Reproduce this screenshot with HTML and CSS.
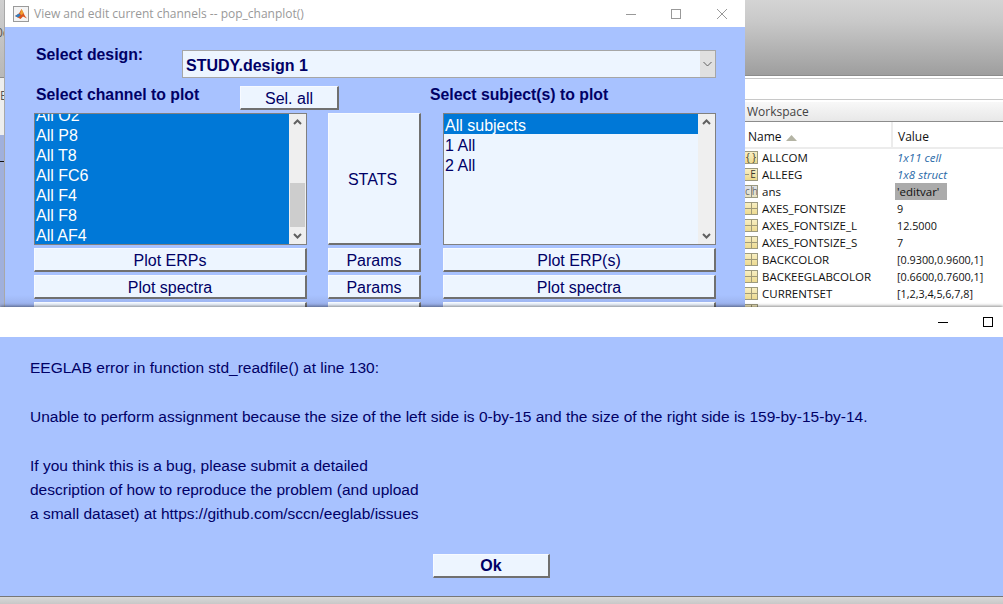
FILE: index.html
```html
<!DOCTYPE html>
<html lang="en">
<head>
<meta charset="utf-8">
<title>pop_chanplot</title>
<link rel="stylesheet" href="styles.css">
</head>
<body>
<svg class="defs" width="0" height="0">
  <defs>
    <linearGradient id="gold" x1="0" y1="0" x2="0" y2="1">
      <stop offset="0" stop-color="#f8efc4"/>
      <stop offset="1" stop-color="#ecd98e"/>
    </linearGradient>
  </defs>
  <symbol id="grid" viewBox="0 0 13 13">
    <rect x="-1" y="0.5" width="13.5" height="12" fill="url(#gold)" stroke="#9c9a80"/>
    <path d="M0 6.5H13M6.5 0V13" stroke="#a09a78" fill="none"/>
  </symbol>
  <symbol id="up" viewBox="0 0 9 6"><path d="M1 5L4.5 1.5L8 5" fill="none" stroke="#606060" stroke-width="2"/></symbol>
  <symbol id="down" viewBox="0 0 9 6"><path d="M1 1L4.5 4.5L8 1" fill="none" stroke="#606060" stroke-width="2"/></symbol>
</svg>

<div class="desktop">
  <div class="edge">
    <span class="edge-a">0c</span>
    <span class="edge-b">E</span>
    <div class="edge-line"></div>
  </div>

  <section class="matlab">
    <div class="matlab-top"></div>
    <div class="toolstrip"></div>
    <div class="ws-title">Workspace</div>
    <div class="ws-head">
      <div class="ws-name">Name <svg class="sort" width="11" height="6" viewBox="0 0 11 6"><path d="M0 6L5.5 0L11 6Z" fill="#b4b4a4"/></svg></div>
      <div class="ws-value">Value</div>
    </div>
    <div class="ws-row"><span class="ico">{ }</span><span class="ws-n">ALLCOM</span><span class="ws-v obj">1x11 cell</span></div>
    <div class="ws-row"><span class="ico ico-e">E</span><span class="ws-n">ALLEEG</span><span class="ws-v obj">1x8 struct</span></div>
    <div class="ws-row"><span class="ico ico-c">ch</span><span class="ws-n">ans</span><span class="ws-v"><span class="sel">'editvar'</span></span></div>
    <div class="ws-row"><svg class="ico-g"><use href="#grid"/></svg><span class="ws-n">AXES_FONTSIZE</span><span class="ws-v">9</span></div>
    <div class="ws-row"><svg class="ico-g"><use href="#grid"/></svg><span class="ws-n">AXES_FONTSIZE_L</span><span class="ws-v">12.5000</span></div>
    <div class="ws-row"><svg class="ico-g"><use href="#grid"/></svg><span class="ws-n">AXES_FONTSIZE_S</span><span class="ws-v">7</span></div>
    <div class="ws-row"><svg class="ico-g"><use href="#grid"/></svg><span class="ws-n">BACKCOLOR</span><span class="ws-v">[0.9300,0.9600,1]</span></div>
    <div class="ws-row"><svg class="ico-g"><use href="#grid"/></svg><span class="ws-n">BACKEEGLABCOLOR</span><span class="ws-v">[0.6600,0.7600,1]</span></div>
    <div class="ws-row"><svg class="ico-g"><use href="#grid"/></svg><span class="ws-n">CURRENTSET</span><span class="ws-v">[1,2,3,4,5,6,7,8]</span></div>
    <div class="ws-row"><svg class="ico-g"><use href="#grid"/></svg><span class="ws-n">CURRENTSTUDY</span><span class="ws-v">1</span></div>
  </section>

  <section class="win win-chan">
    <header class="titlebar">
      <svg class="logo" width="16" height="16" viewBox="0 0 16 16">
        <rect x="0.5" y="0.5" width="15" height="15" fill="#f4f4f4" stroke="#9a9a9a"/>
        <path d="M2 10L6 7.5L8.5 3L12 10L14 12.5L10 10.5L7.5 13Z" fill="#d9541e"/>
        <path d="M2 10L6 7.5L7.5 9.5L5 11.5Z" fill="#2f7fc4"/>
        <path d="M8.5 3L10.5 6.5L9 9L7 8Z" fill="#f0a030"/>
      </svg>
      <span class="title-text">View and edit current channels -- pop_chanplot()</span>
      <div class="win-controls">
        <svg width="10" height="10" viewBox="0 0 10 10"><path d="M0 5.5H10" stroke="#999"/></svg>
        <svg width="10" height="10" viewBox="0 0 10 10"><rect x="0.5" y="0.5" width="9" height="9" fill="none" stroke="#999"/></svg>
        <svg class="close" width="10" height="10" viewBox="0 0 10 10"><path d="M0 0L10 10M10 0L0 10" stroke="#999"/></svg>
      </div>
    </header>
    <div class="chan-body">
      <div class="design-row">
        <label class="lbl lbl-design">Select design:</label>
        <div class="popup">
          <span class="popup-text">STUDY.design 1</span>
          <span class="popup-arrow"><svg width="9" height="6" viewBox="0 0 9 6"><path d="M0.5 1L4.5 5L8.5 1" fill="none" stroke="#606060"/></svg></span>
        </div>
      </div>
      <div class="label-row">
        <label class="lbl lbl-chan">Select channel to plot</label>
        <button class="btn btn-selall">Sel. all</button>
        <label class="lbl lbl-subj">Select subject(s) to plot</label>
      </div>
      <div class="panel-grid">
        <div class="list">
          <div class="list-rows list-scrolled">
            <div class="item on">All O2</div>
            <div class="item on">All P8</div>
            <div class="item on">All T8</div>
            <div class="item on">All FC6</div>
            <div class="item on">All F4</div>
            <div class="item on">All F8</div>
            <div class="item on">All AF4</div>
          </div>
          <div class="scroll">
            <svg class="chev" width="9" height="6"><use href="#up"/></svg>
            <div class="track"><div class="thumb"></div></div>
            <svg class="chev" width="9" height="6"><use href="#down"/></svg>
          </div>
        </div>
        <button class="btn btn-stats">STATS</button>
        <div class="list col3">
          <div class="list-rows list-plain">
            <div class="item on">All subjects</div>
            <div class="item">1 All</div>
            <div class="item">2 All</div>
          </div>
          <div class="scroll">
            <svg class="chev" width="9" height="6"><use href="#up"/></svg>
            <div class="track"></div>
            <svg class="chev" width="9" height="6"><use href="#down"/></svg>
          </div>
        </div>
        <button class="btn">Plot ERPs</button>
        <button class="btn">Params</button>
        <button class="btn col3">Plot ERP(s)</button>
        <button class="btn">Plot spectra</button>
        <button class="btn">Params</button>
        <button class="btn col3">Plot spectra</button>
        <button class="btn">Plot ERSP</button>
        <button class="btn">Params</button>
        <button class="btn col3">Plot ERSP</button>
      </div>
    </div>
  </section>

  <section class="win-err">
    <header class="err-title">
      <svg width="10" height="10" viewBox="0 0 10 10"><path d="M0 5.5H10" stroke="#000"/></svg>
      <svg width="10" height="10" viewBox="0 0 10 10"><rect x="0.5" y="0.5" width="9" height="9" fill="none" stroke="#000"/></svg>
    </header>
    <div class="err-body">
      <p class="msg msg-first">EEGLAB error in function std_readfile() at line 130:</p>
      <p class="msg">Unable to perform assignment because the size of the left side is 0-by-15 and the size of the right side is 159-by-15-by-14.</p>
      <p class="msg">If you think this is a bug, please submit a detailed<br>description of how to reproduce the problem (and upload<br>a small dataset) at https://github.com/sccn/eeglab/issues</p>
      <button class="btn btn-ok">Ok</button>
    </div>
    <div class="err-foot"></div>
  </section>
</div>
</body>
</html>
```
FILE: styles.css
```css
* { box-sizing: border-box; }
html, body { margin: 0; padding: 0; }
body { width: 1003px; height: 604px; overflow: hidden; background: #fff; font-family: "Liberation Sans", Arial, sans-serif; color: #000066; }
.defs { position: absolute; }
.desktop { position: relative; width: 1003px; height: 604px; overflow: hidden; }

/* background slivers */
.edge { position: absolute; left: 0; top: 0; width: 5px; height: 307px; overflow: hidden; background: linear-gradient(#eeeeee 0 135px, #a0b0dc 135px); border-right: 1px solid #a8a8a8; font: 12px "Open Sans", sans-serif; color: #555; }
.edge::before { content: ""; position: absolute; left: 0; top: 0; width: 5px; height: 77px; background: linear-gradient(#d0d0d0, #b8b8b8); border-bottom: 1px solid #8c8c8c; }
.edge-a { position: absolute; left: -4px; top: 24px; }
.edge-b { position: absolute; left: 0; top: 87px; }
.edge-line { position: absolute; left: 0; top: 161px; width: 5px; height: 1px; background: #111; }

/* MATLAB behind */
.matlab { position: absolute; left: 745px; top: 0; width: 258px; height: 307px; overflow: hidden; background: #fff; font: 12px "Open Sans", sans-serif; color: #111; }
.matlab-top { height: 76px; background: linear-gradient(#d4d4d4, #c8c8c8 30%, #9e9e9e); border-bottom: 1px solid #8c8c8c; }
.toolstrip { height: 22px; margin-top: 2px; background: #fff; border-top: 1px solid #c8c8c8; border-bottom: 1px solid #c8c8c8; }
.ws-title { height: 20px; margin-top: 2px; padding: 0 0 0 2px; line-height: 19px; background: linear-gradient(#f8f8f8, #e8e8e8); border-bottom: 1px solid #8c8c8c; color: #444; }
.ws-head { display: flex; height: 27px; border-bottom: 2px solid #ececec; line-height: 30px; }
.ws-name { width: 148px; padding-left: 3px; border-right: 2px solid #ececec; }
.sort { margin-left: 1px; }
.ws-value { padding-left: 5px; }
.ws-row { display: flex; align-items: center; height: 17px; white-space: nowrap; }
.ws-n { width: 131px; margin-left: 4px; font-size: 11.5px; }
.ws-v { margin-left: 4px; font-size: 10.8px; }
.obj { font-size: 11.5px; font-style: italic; color: #2a6aa8; }
.sel { display: inline-block; margin-left: -2px; padding: 0 8px 0 2px; font-size: 11.5px; line-height: 17px; background: #ababab; }
.ico { display: block; flex: none; width: 13px; height: 13px; border: 1px solid #9c9a80; border-left: 0; background: linear-gradient(#f8efc4, #ecd98e); color: #3a3a30; font-size: 10px; line-height: 11px; text-align: center; overflow: hidden; white-space: nowrap; }
.ico-e { padding-left: 4px; background: linear-gradient(#9c9a80, #9c9a80) 0 5px / 4px 1px no-repeat, linear-gradient(#f8efc4, #ecd98e); }
.ico-c { text-align: left; letter-spacing: 2px; color: #6a6a70; background: linear-gradient(#8f8f86, #8f8f86) 6px 0 / 1px 100% no-repeat, linear-gradient(#dcdfe6, #e8e2c0); }
.ico-g { display: block; flex: none; width: 13px; height: 13px; }

/* channel window */
.win { position: absolute; left: 5px; top: 0; width: 740px; height: 307px; overflow: hidden; background: #a8c2ff; }
.titlebar { display: flex; align-items: center; height: 27px; padding-left: 8px; background: #fff; }
.logo { flex: none; }
.title-text { margin-left: 5px; font: 12px "Open Sans", sans-serif; color: #999; white-space: nowrap; }
.win-controls { display: flex; gap: 35px; margin-left: auto; padding-right: 18px; }
.close { margin-left: 1px; }
.chan-body { padding: 18px 29px 0; height: 280px; background: linear-gradient(#a8c2ff 0 268px, #98aee8 280px); }
.design-row { display: flex; height: 33px; }
.lbl { font-weight: bold; font-size: 15.8px; line-height: 18px; white-space: nowrap; }
.lbl-design { width: 148px; padding-left: 2px; padding-top: 1px; }
.popup { display: flex; align-items: center; width: 534px; height: 28px; margin-top: 5px; padding-left: 3px; background: #edf5ff; border: 1px solid #a6a6a6; font-weight: bold; font-size: 16px; }
.popup-text { flex: 1; padding-top: 3px; }
.popup-arrow { display: flex; align-items: center; justify-content: center; width: 15px; height: 100%; background: #e0e0e0; }
.label-row { display: flex; height: 24px; margin-top: 8px; }
.lbl-chan { width: 206px; padding-left: 2px; }
.lbl-subj { margin-left: 91px; }
.btn { display: block; padding: 2px 0 0; background: #edf5ff; border: 2px solid; border-color: #f7faff #707070 #707070 #f7faff; border-width: 1px 2px 2px 1px; font: 16px "Liberation Sans", Arial, sans-serif; color: #000066; }
.btn-selall { width: 99px; height: 24px; }
.panel-grid { display: grid; grid-template-columns: 273px 93px 274px; grid-template-rows: 132px 24px 24px 24px; gap: 3px 21px; margin-top: 3px; }
.col3 { margin-left: 1px; }
.btn-stats { height: 132px; padding-right: 3px; }
.list { display: flex; border: 1px solid #808080; background: #edf5ff; overflow: hidden; }
.list-rows { flex: 1; overflow: hidden; font-size: 16px; }
.list-scrolled .item:first-child { margin-top: -9px; }
.list-scrolled { background: #0078d7; }
.item { height: 20px; line-height: 22px; padding-left: 1px; }
.list-plain .item { line-height: 24px; }
.item.on { background: #0078d7; color: #fff; }
.scroll { display: flex; flex-direction: column; align-items: center; flex: none; width: 17px; background: #efefef; padding: 5px 0; }
.chev { display: block; flex: none; }
.track { flex: 1; width: 15px; position: relative; }
.thumb { position: absolute; left: 0; right: 0; bottom: 6px; height: 44px; background: #cdcdcd; }

/* error dialog */
.win-err { position: absolute; left: 0; top: 307px; width: 1003px; height: 297px; box-shadow: 0 -1px 3px rgba(0,0,0,.45); background: #fff; }
.err-title { display: flex; align-items: center; justify-content: flex-end; gap: 35px; height: 30px; padding-right: 10px; background: #fff; }
.err-body { height: 259px; padding: 19px 0 0 30px; background: #a8c2ff; }
.msg { margin: 0 0 24.4px; font-size: 15.5px; line-height: 24.4px; color: #000066; white-space: nowrap; }
.btn-ok { width: 117px; height: 24px; margin: 27px 0 0 403px; font-weight: bold; }
.err-foot { height: 8px; border-top: 1px solid #777; background: linear-gradient(#d8d8d8, #c8c8c8); }
```
